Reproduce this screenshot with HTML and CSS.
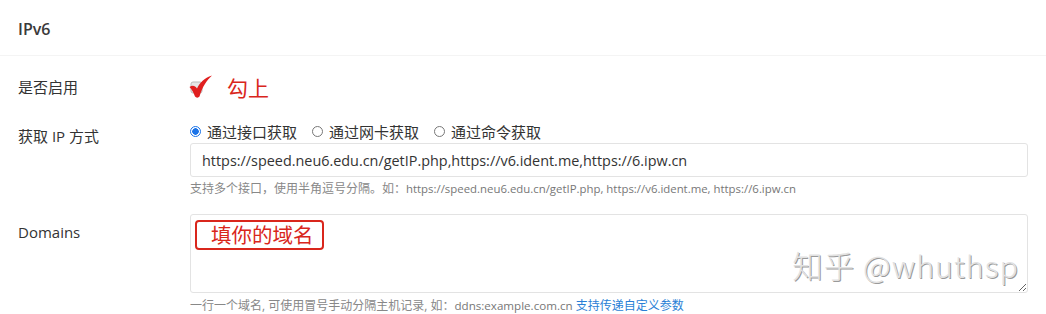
FILE: index.html
```html
<!DOCTYPE html>
<html lang="zh-CN">
<head>
  <meta charset="UTF-8" />
  <title>IPv6</title>
  <link rel="stylesheet" href="styles.css">
</head>
<body>
  <div class="card">
    <div class="card-header">IPv6</div>

    <div class="card-body">
      <div class="row row-enable">
        <div class="label">是否启用</div>
        <div class="control check-line">
          <svg class="check" width="26" height="24" viewBox="0 0 26 24">
            <rect x="2" y="7" width="11" height="11" rx="2" fill="#e6e6e6" stroke="#bbb" />
            <path d="M0.5 12 C3.5 10 6 10.5 8 13.5 C11 7.5 15 3 23 0.5 C17.5 5.5 13.5 11.5 10.5 21.5 C9.5 23 7 23 6 21.5 C4.5 17.5 3 14.5 0.5 12 Z" fill="#e01f1f" />
          </svg>
          <span class="mark-text">勾上</span>
        </div>
      </div>

      <div class="row row-ip">
        <div class="label label-pad">获取 IP 方式</div>
        <div class="control">
          <div class="radios">
            <label class="radio"><span class="dot checked"></span>通过接口获取</label>
            <label class="radio"><span class="dot"></span>通过网卡获取</label>
            <label class="radio"><span class="dot"></span>通过命令获取</label>
          </div>
          <input class="input" type="text" value="https://speed.neu6.edu.cn/getIP.php,https://v6.ident.me,https://6.ipw.cn">
          <div class="help">支持多个接口，使用半角逗号分隔。如：<span class="latin">https://speed.neu6.edu.cn/getIP.php, https://v6.ident.me, https://6.ipw.cn</span></div>
        </div>
      </div>

      <div class="row row-domains">
        <div class="label label-pad2">Domains</div>
        <div class="control">
          <div class="area-wrap">
            <textarea class="area"></textarea>
            <div class="note">填你的域名</div>
            <div class="watermark">知乎 @whuthsp</div>
          </div>
          <div class="help help2">一行一个域名, 可使用冒号手动分隔主机记录, 如：<span class="latin">ddns:example.com.cn</span> <a class="link" href="#">支持传递自定义参数</a></div>
        </div>
      </div>
    </div>
  </div>
</body>
</html>
```

FILE: styles.css
```css
* {
  margin: 0;
  padding: 0;
  box-sizing: border-box;
}

html, body {
  width: 100%;
  height: 100%;
  background: #fff;
  font-family: 'Open Sans', 'Noto Sans CJK SC', sans-serif;
  color: #333;
  overflow: hidden;
}

.card-header {
  padding: 19px 18px 16px;
  line-height: 20px;
  font-size: 16px;
  font-weight: 600;
  color: #3a3a3a;
  border-bottom: 1px solid #f4f4f4;
}

.card-body {
  padding: 19px 18px 0;
}

.row {
  display: grid;
  grid-template-columns: 172px 1fr;
}

.label {
  font-size: 15px;
  line-height: 24px;
  color: #333;
}

.row-ip {
  margin-top: 22px;
}

.row-domains {
  margin-top: 17px;
}

.label-pad {
  padding-top: 5px;
  line-height: 20px;
}

.label-pad2 {
  padding-top: 8px;
  line-height: 20px;
}

/* 勾选标注 */
.check-line {
  display: flex;
  align-items: center;
  height: 24px;
}

.check {
  display: block;
  margin-left: -1px;
}

.mark-text {
  margin-left: 12px;
  font-size: 21px;
  color: #d9261c;
  font-family: 'Noto Sans CJK SC', sans-serif;
}

/* 单选 */
.radios {
  display: flex;
  height: 20px;
  align-items: center;
}

.radio {
  display: flex;
  align-items: center;
  font-size: 15px;
  color: #333;
  margin-right: 15px;
}

.dot {
  width: 11px;
  height: 11px;
  border-radius: 50%;
  border: 1px solid #777;
  margin-right: 6px;
  background: #fff;
}

.dot.checked {
  border-color: #1a73e8;
  background: radial-gradient(circle, #1a73e8 0 3px, #fff 3.5px);
}

.input {
  display: block;
  width: 100%;
  height: 34px;
  margin-top: 2px;
  padding: 0 11px;
  border: 1px solid #e3e3e3;
  border-radius: 3px;
  font-family: 'Open Sans', sans-serif;
  font-size: 14.4px;
  color: #333;
  outline: none;
}

.help {
  margin-top: 4px;
  font-size: 12px;
  line-height: 16px;
  color: #888;
}

.help .latin {
  font-size: 11.4px;
  color: #777;
}

.help2 {
  margin-top: 5px;
  font-size: 12px;
}

.help2 .latin {
  font-size: 11.6px;
}

.link {
  color: #2a7fd6;
  text-decoration: none;
}

/* 域名输入 */
.area-wrap {
  position: relative;
}

.area {
  display: block;
  width: 100%;
  height: 79px;
  border: 1px solid #e3e3e3;
  border-radius: 3px;
  resize: vertical;
  outline: none;
}

.note {
  position: absolute;
  left: 5px;
  top: 6px;
  width: 129px;
  height: 30px;
  padding-left: 14px;
  border: 2px solid #d9261c;
  border-radius: 4px;
  font-family: 'Noto Sans CJK SC', sans-serif;
  font-size: 20.5px;
  line-height: 25px;
  color: #d9261c;
}

.watermark {
  position: absolute;
  right: 9px;
  top: 35px;
  font-size: 30.5px;
  font-weight: 300;
  line-height: 32px;
  color: #e2e2e2;
  text-shadow: 1px 1px 0 #9a9a9a;
  font-family: 'Noto Sans CJK SC', sans-serif;
  letter-spacing: 1px;
}
```
